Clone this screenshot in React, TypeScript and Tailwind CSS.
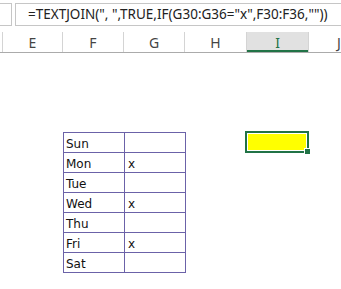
export default function App() {
  const days = [
    { d: "Sun", x: "" },
    { d: "Mon", x: "x" },
    { d: "Tue", x: "" },
    { d: "Wed", x: "x" },
    { d: "Thu", x: "" },
    { d: "Fri", x: "x" },
    { d: "Sat", x: "" },
  ];
  const cols = [
    { name: "E", w: "w-[60px]" },
    { name: "F", w: "w-[61px]" },
    { name: "G", w: "w-[61px]" },
    { name: "H", w: "w-[62px]" },
  ];

  return (
    <div className="w-[341px] h-[289px] bg-white overflow-hidden relative">
      {/* formula bar */}
      <div className="flex pt-[3px] gap-[3px] h-[26px]">
        <div className="w-[12px] h-[23px] border border-l-0 border-[#c6c6c6] bg-white" />
        <div className="flex-1 h-[23px] border border-r-0 border-[#c6c6c6] bg-white flex items-center pl-[12px] -mr-[2px]">
          <span className="text-[13.5px] leading-none text-[#222] whitespace-nowrap font-['Noto_Sans',sans-serif]">
            =TEXTJOIN(&quot;, &quot;,TRUE,IF(G30:G36=&quot;x&quot;,F30:F36,&quot;&quot;))
          </span>
        </div>
      </div>

      {/* column headers */}
      <div className="mt-[6px] flex h-[21px] border-b border-[#ababab] font-['Noto_Sans',sans-serif] text-[14px] text-[#444]">
        <div className="w-[3px] h-[20px] border-r border-[#d4d4d4]" />
        {cols.map((c) => (
          <div key={c.name} className={`${c.w} h-[20px] border-r border-[#d4d4d4] flex items-center justify-center`}>
            {c.name}
          </div>
        ))}
        <div className="w-[61px] h-[20px] bg-[#e1e1e1] border-b-2 border-[#217346] text-[#217346] flex items-center justify-center pt-[2px]">
          I
        </div>
        <div className="flex-1 h-[20px] border-l border-[#d4d4d4] flex items-center pl-[28px]">J</div>
      </div>

      {/* sheet body */}
      <div className="flex items-start pt-[79px]">
        <div className="w-[63px] shrink-0" />
        <div className="grid grid-cols-[61px_61px] border-l border-t border-[#6b62a8] font-['DejaVu_Sans',sans-serif] text-[12px] text-[#111]">
          {days.map((r) => (
            <div key={r.d} className="contents">
              <div className="h-[20px] border-r border-b border-[#6b62a8] flex items-end pb-[2px] pl-[2px] leading-none">
                {r.d}
              </div>
              <div className="h-[20px] border-r border-b border-[#6b62a8] flex items-end pb-[2px] pl-[3px] leading-none">
                {r.x}
              </div>
            </div>
          ))}
        </div>
        <div className="ml-[59px] -mt-px relative w-[64px] h-[22px] border-2 border-[#217346] p-px bg-white">
          <div className="w-full h-full bg-[#ffff00]" />
          <div className="absolute -right-[4px] -bottom-[4px] w-[7px] h-[7px] bg-[#217346] border border-white" />
        </div>
      </div>
    </div>
  );
}
